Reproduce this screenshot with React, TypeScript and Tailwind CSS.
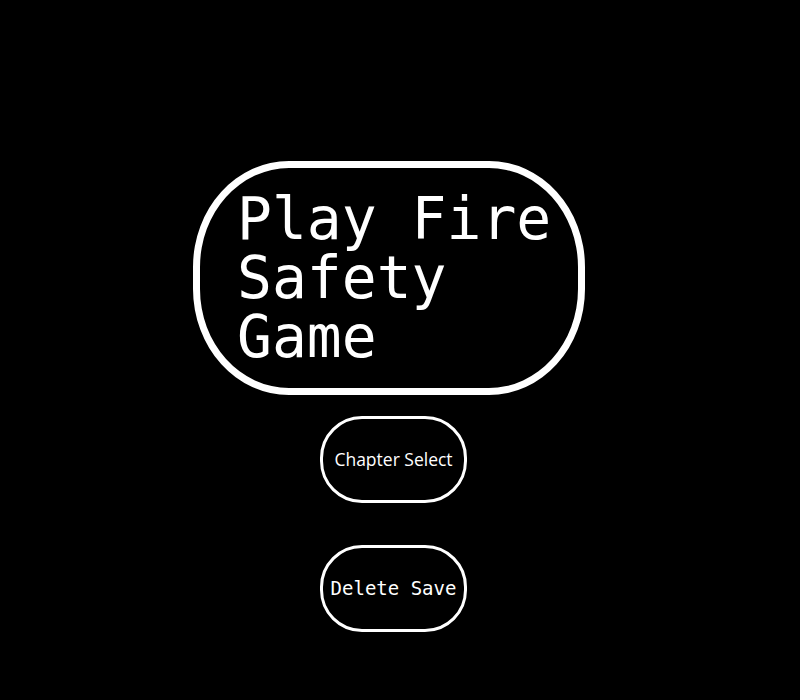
import React from 'react'

// Title screen: one big pill for starting the game, two small pills below it.

const mono = { fontFamily: '"DejaVu Sans Mono", "Liberation Mono", monospace' }
const sans = { fontFamily: '"Open Sans", "Noto Sans", sans-serif' }

const TITLE_LINES = ['Play Fire', 'Safety', 'Game']

export default function App() {
  return (
    <div className="w-[800px] h-[700px] bg-black text-white overflow-hidden">
      <div className="w-[787px] flex flex-col items-center pt-[161px]">
        {/* Play */}
        <button
          className="mr-[9px] w-[392px] h-[234px] rounded-[96px/106px] border-[7px] border-white bg-black flex flex-col justify-center pl-[37px] text-left"
        >
          {TITLE_LINES.map(line => (
            <div key={line} className="h-[59px] text-[58px] leading-[59px] text-white whitespace-nowrap" style={mono}>
              {line}
            </div>
          ))}
        </button>

        {/* Chapter select */}
        <button
          className="mt-[21px] w-[147px] h-[87px] rounded-[42px] border-[3px] border-white bg-black flex items-center justify-center"
        >
          <span className="text-[17.5px] text-white" style={sans}>
            Chapter Select
          </span>
        </button>

        {/* Delete save */}
        <button
          className="mt-[42px] w-[147px] h-[87px] rounded-[42px] border-[3px] border-white bg-black flex items-center justify-center"
        >
          <span className="text-[19px] text-white" style={mono}>
            Delete Save
          </span>
        </button>
      </div>
    </div>
  )
}
